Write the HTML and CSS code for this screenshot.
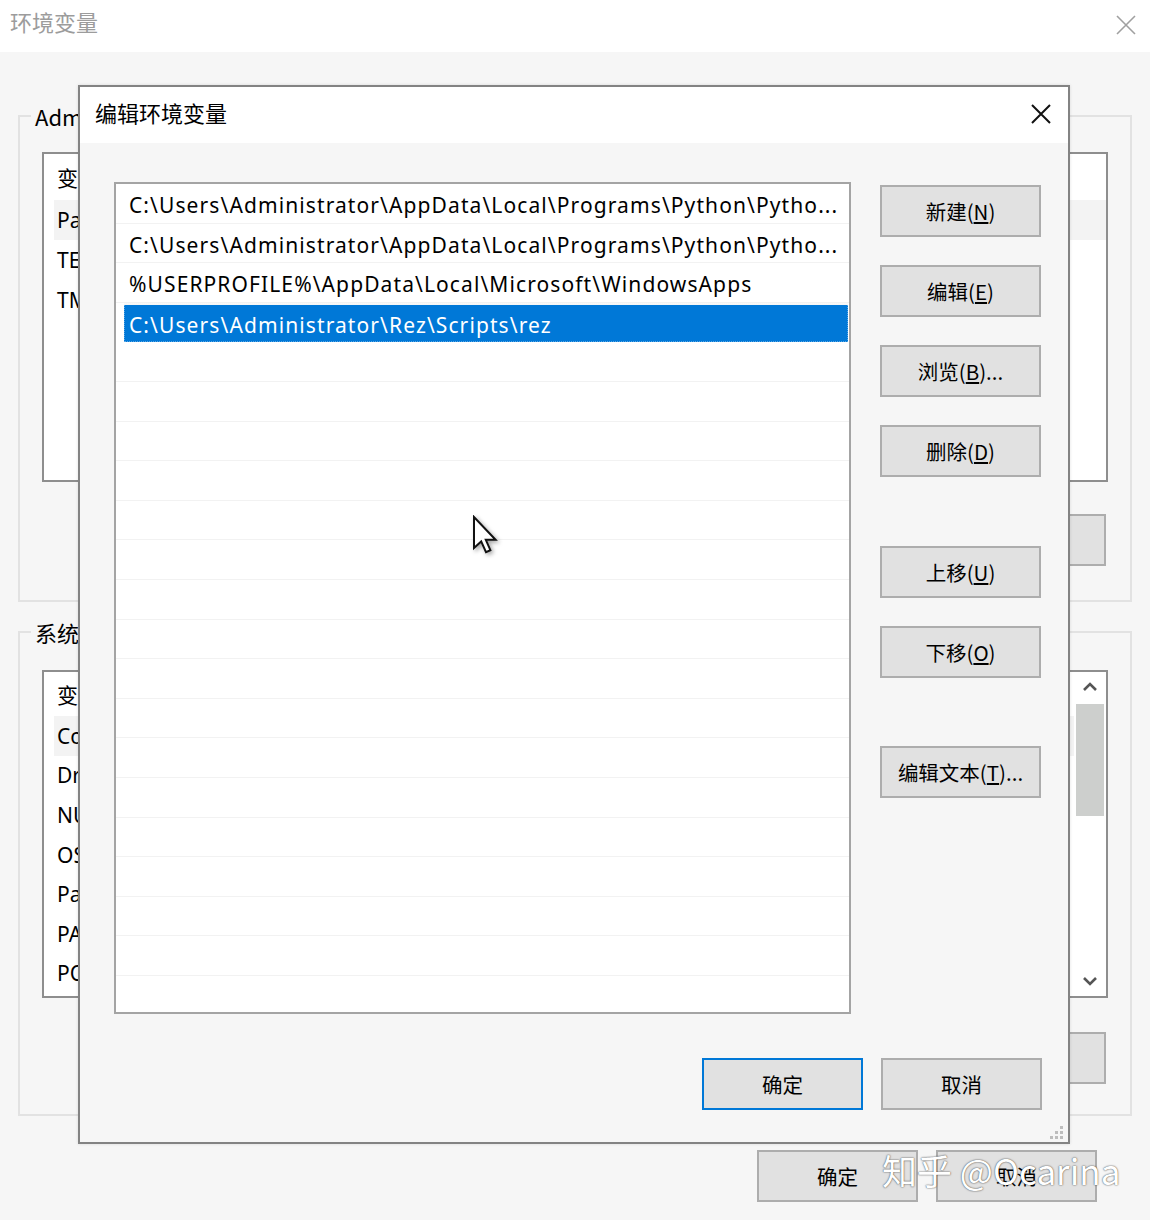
FILE: index.html
```html
<!DOCTYPE html>
<html lang="zh-CN">
<head>
<meta charset="utf-8">
<title>环境变量</title>
<link rel="stylesheet" href="styles.css">
</head>
<body>
<div class="win">
  <div class="win-title">
    <span class="win-title-text">环境变量</span>
    <svg class="win-close" width="20" height="20" viewBox="0 0 20 20"><path d="M1 1L19 19M19 1L1 19" stroke="#a0a0a0" stroke-width="1.6" fill="none"/></svg>
  </div>
  <div class="win-body">
    <fieldset class="group g1">
      <legend>Administrator 的用户变量(U)</legend>
      <div class="vlist l1">
        <div class="vhead"><span class="c1">变量</span></div>
        <div class="vrow soft"><span class="c1">Path</span></div>
        <div class="vrow"><span class="c1">TEMP</span></div>
        <div class="vrow"><span class="c1">TMP</span></div>
      </div>
      <div class="gbtns">
        <button class="btn">新建(<u>N</u>)...</button>
        <button class="btn">编辑(<u>E</u>)...</button>
        <button class="btn">删除(<u>D</u>)</button>
      </div>
    </fieldset>
    <fieldset class="group g2">
      <legend>系统变量(S)</legend>
      <div class="vlist l2">
        <div class="vlist-inner">
          <div class="vhead"><span class="c1">变量</span></div>
          <div class="vrow soft"><span class="c1">ComSpec</span></div>
          <div class="vrow"><span class="c1">DriverData</span></div>
          <div class="vrow"><span class="c1">NUMBER_OF_PROCESSORS</span></div>
          <div class="vrow"><span class="c1">OS</span></div>
          <div class="vrow"><span class="c1">Path</span></div>
          <div class="vrow"><span class="c1">PATHEXT</span></div>
          <div class="vrow"><span class="c1">POWERSHELL_DISTRIBUTION_CHANNEL</span></div>
        </div>
        <div class="vscroll">
          <svg class="arrow" width="16" height="10" viewBox="0 0 16 10"><path d="M2 8L8 2L14 8" stroke="#555" stroke-width="2.6" fill="none"/></svg>
          <div class="thumb"></div>
          <div class="track"></div>
          <svg class="arrow" width="16" height="10" viewBox="0 0 16 10"><path d="M2 2L8 8L14 2" stroke="#555" stroke-width="2.6" fill="none"/></svg>
        </div>
      </div>
      <div class="gbtns">
        <button class="btn">新建(<u>W</u>)...</button>
        <button class="btn">编辑(<u>I</u>)...</button>
        <button class="btn">删除(<u>L</u>)</button>
      </div>
    </fieldset>
    <div class="win-foot">
      <button class="btn">确定</button>
      <button class="btn">取消</button>
    </div>
  </div>
</div>

<div class="dlg">
  <div class="dlg-title">
    <span class="dlg-title-text">编辑环境变量</span>
    <svg class="dlg-close" width="20" height="20" viewBox="0 0 20 20"><path d="M1 1L19 19M19 1L1 19" stroke="#111" stroke-width="2" fill="none"/></svg>
  </div>
  <div class="dlg-body">
    <div class="dlg-main">
      <div class="plist">
        <div class="prow">C:\Users\Administrator\AppData\Local\Programs\Python\Pytho...</div>
        <div class="prow">C:\Users\Administrator\AppData\Local\Programs\Python\Pytho...</div>
        <div class="prow">%USERPROFILE%\AppData\Local\Microsoft\WindowsApps</div>
        <div class="prow sel">C:\Users\Administrator\Rez\Scripts\rez</div>
        <div class="prow"></div><div class="prow"></div><div class="prow"></div><div class="prow"></div>
        <div class="prow"></div><div class="prow"></div><div class="prow"></div><div class="prow"></div>
        <div class="prow"></div><div class="prow"></div><div class="prow"></div><div class="prow"></div>
        <div class="prow"></div><div class="prow"></div><div class="prow"></div><div class="prow"></div>
        <div class="prow last"></div>
      </div>
      <div class="pbtns">
        <button class="btn">新建(<u>N</u>)</button>
        <button class="btn">编辑(<u>E</u>)</button>
        <button class="btn">浏览(<u>B</u>)...</button>
        <button class="btn">删除(<u>D</u>)</button>
        <button class="btn gapped">上移(<u>U</u>)</button>
        <button class="btn">下移(<u>O</u>)</button>
        <button class="btn gapped2">编辑文本(<u>T</u>)...</button>
      </div>
    </div>
    <div class="dlg-foot">
      <button class="btn default">确定</button>
      <button class="btn">取消</button>
    </div>
  </div>
  <svg class="grip" width="16" height="16" viewBox="0 0 16 16">
    <rect x="12" y="2" width="3" height="3" fill="#bdbdbd"/>
    <rect x="7" y="7" width="3" height="3" fill="#bdbdbd"/>
    <rect x="12" y="7" width="3" height="3" fill="#bdbdbd"/>
    <rect x="2" y="12" width="3" height="3" fill="#bdbdbd"/>
    <rect x="7" y="12" width="3" height="3" fill="#bdbdbd"/>
    <rect x="12" y="12" width="3" height="3" fill="#bdbdbd"/>
  </svg>
</div>

<svg class="cursor" width="28" height="40" viewBox="0 0 14 20">
  <path d="M1 1L1 16.5L4.6 13.2L7 18.6L9.2 17.6L6.9 12.4L11.8 12.4Z" fill="#fff" stroke="#111" stroke-width="1" stroke-linejoin="miter"/>
</svg>

<div class="watermark">知乎 @Ocarina</div>
</body>
</html>
```

FILE: styles.css
```css
* { box-sizing: border-box; }
html, body { margin: 0; padding: 0; }
body {
  width: 1150px;
  height: 1220px;
  background: #f6f6f6;
  font-family: "Noto Sans", "Noto Sans CJK SC", sans-serif;
  color: #000;
  position: relative;
  overflow: hidden;
}
u { text-decoration: underline; text-underline-offset: 2px; }

/* background window */
.win-title {
  height: 52px;
  background: #fff;
  display: flex;
  align-items: center;
  justify-content: space-between;
  padding: 0 14px 11px 10px;
}
.win-title-text {
  font-family: "Noto Sans CJK SC", sans-serif;
  font-size: 22px;
  color: #9c9c9c;
}
.win-close { margin-top: 9px; }
.win-body {
  padding: 49px 18px 0 18px;
}
.group {
  margin: 0;
  border: 2px solid #e2e2e2;
  padding: 21px 22px 34px 22px;
  min-width: 0;
}
.group legend {
  margin-left: -11px;
  padding: 0 4px;
  font-family: "Noto Sans CJK SC", sans-serif;
  font-size: 22px;
  line-height: 30px;
  white-space: nowrap;
}
.g2 { margin-top: 15px; padding-top: 23px; padding-bottom: 30px; }
.vlist {
  background: #fff;
  border: 2px solid #8e8e8e;
  font-family: "Noto Sans", "Noto Sans CJK SC", sans-serif;
  font-size: 21px;
}
.l1 { height: 330px; }
.l2 { height: 328px; display: flex; }
.vlist-inner { flex: 1; min-width: 0; }
.vhead { height: 46px; display: flex; align-items: center; padding-left: 13px; font-family: "Noto Sans CJK SC", sans-serif; }
.l2 .vhead { height: 44px; }
.vrow { height: 40px; display: flex; align-items: center; padding-left: 13px; white-space: nowrap; }
.l2 .vrow { height: 39.6px; }
.vrow.soft { background: #f3f3f3; margin-left: 10px; padding-left: 3px; }
.c1 { width: 330px; flex: none; }
.vscroll {
  width: 32px;
  flex: none;
  display: flex;
  flex-direction: column;
  align-items: center;
}
.vscroll .arrow { flex: none; margin: 10px 0 12px; }
.vscroll .arrow:last-child { margin: 12px 0 10px; }
.thumb { width: 28px; height: 112px; background: #cdcfcd; flex: none; }
.track { flex: 1; }
.gbtns {
  display: flex;
  justify-content: flex-end;
  gap: 18px;
  margin-top: 32px;
  padding-right: 2px;
}
.g2 .gbtns { margin-top: 34px; }
.btn {
  width: 161px;
  height: 52px;
  background: #e1e1e1;
  border: 2px solid #adadad;
  padding: 0;
  font-family: "Noto Sans CJK SC", sans-serif;
  font-size: 20.5px;
  color: #000;
  display: flex;
  align-items: center;
  justify-content: center;
  white-space: nowrap;
}
.win-foot {
  display: flex;
  justify-content: flex-end;
  gap: 18px;
  margin-top: 34px;
  padding-right: 35px;
}

/* edit dialog */
.dlg {
  position: absolute;
  left: 78px;
  top: 85px;
  width: 992px;
  height: 1059px;
  border: 2px solid #838383;
  background: #f6f6f6;
  box-shadow: 0 0 3px rgba(0,0,0,0.12);
}
.dlg-title {
  height: 56px;
  background: #fff;
  display: flex;
  align-items: center;
  justify-content: space-between;
  padding: 0 17px 6px 15px;
}
.dlg-title-text {
  font-family: "Noto Sans CJK SC", sans-serif;
  font-size: 22px;
}
.dlg-close { margin-top: 4px; }
.dlg-body {
  padding: 39px 0 0 34px;
}
.dlg-main { display: flex; align-items: flex-start; }
.plist {
  width: 737px;
  height: 832px;
  background: #fff;
  border: 2px solid #a4a4a4;
  overflow: hidden;
}
.prow {
  height: 39.6px;
  border-bottom: 1px solid #f2f2f2;
  display: flex;
  align-items: center;
  padding: 4px 0 0 13px;
  font-size: 21px;
  letter-spacing: 1.1px;
  white-space: nowrap;
  overflow: hidden;
}
.prow.last { border-bottom: none; }
.prow.sel {
  background: #0078d7;
  color: #fff;
  margin: 0 1px 0 8px;
  padding: 2px 0 0 5px;
  border-top: 2px solid #f6f6f6;
  border-bottom: none;
  outline: 1px dotted rgba(255,255,255,0.35);
  outline-offset: -1px;
}
.pbtns {
  display: flex;
  flex-direction: column;
  gap: 28px;
  margin-left: 29px;
  padding-top: 3px;
}
.pbtns .gapped { margin-top: 41px; }
.pbtns .gapped2 { margin-top: 40px; }
.dlg-foot {
  display: flex;
  justify-content: flex-end;
  gap: 18px;
  margin-top: 44px;
  padding-right: 26px;
}
.btn.default { border-color: #0078d7; }
.grip {
  position: absolute;
  right: 4px;
  bottom: 2px;
}

/* overlays */
.cursor {
  position: absolute;
  left: 472px;
  top: 515px;
  filter: drop-shadow(2px 2px 2px rgba(0,0,0,0.35));
}
.watermark {
  position: absolute;
  left: 882px;
  top: 1145px;
  font-family: "Noto Sans CJK SC", sans-serif;
  font-size: 35px;
  line-height: 50px;
  color: #fff;
  white-space: nowrap;
  text-shadow: 0 0 2px rgba(0,0,0,0.55), 0 0 1px rgba(0,0,0,0.5);
}
```
